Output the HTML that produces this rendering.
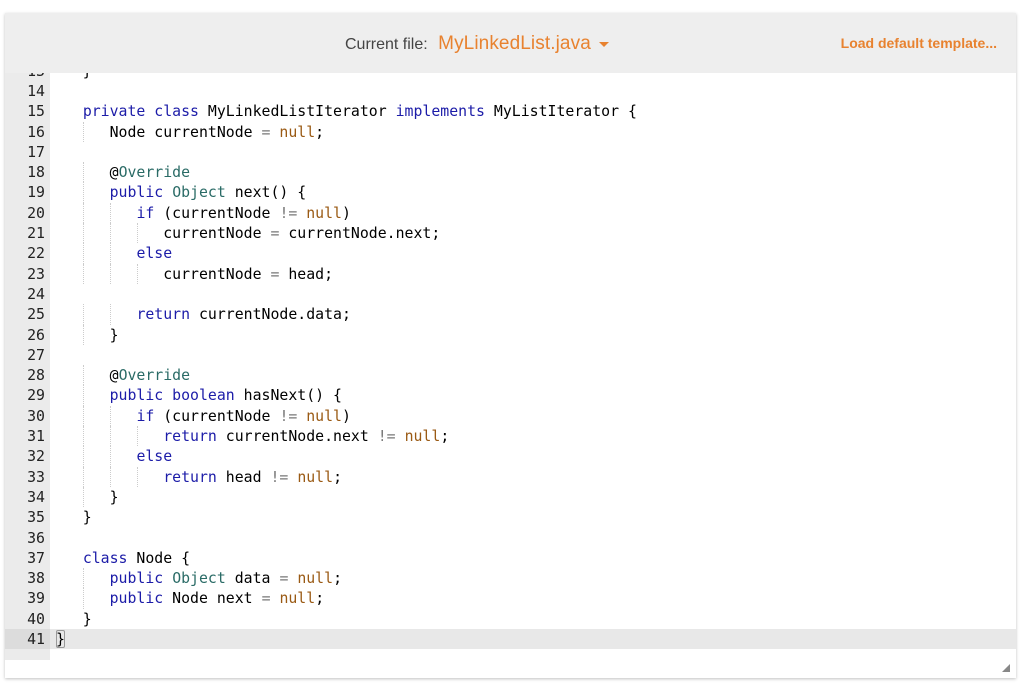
<!DOCTYPE html>
<html><head><meta charset="utf-8"><style>
html,body{margin:0;padding:0;background:#fff;width:1024px;height:686px;overflow:hidden}
.card{position:absolute;left:5px;top:13px;width:1011px;height:665px;background:#fff;box-shadow:0 1px 3px rgba(0,0,0,.25);overflow:hidden}
.hdr{position:absolute;left:0;top:0;width:100%;height:60px;background:#eeeeee;z-index:3;font-family:"Liberation Sans",sans-serif}
.cur{position:absolute;left:340px;top:20px;font-size:16px;color:#444}
.cur b{color:#e8822f;font-weight:normal;font-size:19px;margin-left:6px;letter-spacing:0.1px}
.tri{display:inline-block;width:0;height:0;border-left:5px solid transparent;border-right:5px solid transparent;border-top:5px solid #e8822f;vertical-align:middle;margin-left:8px}
.ld{position:absolute;right:19px;top:22px;font-size:14px;color:#e8822f;font-weight:bold}
.gut{position:absolute;left:0;top:0;width:45px;height:647px;background:#ebebeb;z-index:1}
.code{position:absolute;left:0;top:47.7px;width:100%;z-index:2;font-family:"DejaVu Sans Mono","Liberation Mono",monospace;font-size:14.85px}
.l{height:20.3px;line-height:20.3px;position:relative;white-space:pre;color:#000}
.n{position:absolute;left:0;width:40px;text-align:right;color:#222}
.t{position:absolute;left:51px}
.act{background:#e8e8e8}
.k{color:#1c1ca8}.nu{color:#9a5a14}.o{color:#777}.a{color:#2a6b66}
.g{position:absolute;top:0;height:20.3px;border-left:1px dotted #ccc}
.br{outline:1px solid #999;outline-offset:-1px;border-radius:2px}
.rs{position:absolute;right:6px;bottom:6px;width:0;height:0;border-left:8px solid transparent;border-bottom:8px solid #888;z-index:4}
</style></head><body>
<div class="card">
<div class="hdr"><div class="cur">Current file: <b>MyLinkedList.java</b><span class="tri"></span></div><div class="ld">Load default template...</div></div>
<div class="gut"></div>
<div class="code">
<div class="l"><span class="n">13</span><span class="t">   }</span></div>
<div class="l"><span class="n">14</span><span class="t"></span></div>
<div class="l"><span class="n">15</span><span class="t">   <span class="k">private class</span> MyLinkedListIterator <span class="k">implements</span> MyListIterator {</span></div>
<div class="l"><span class="n">16</span><i class="g" style="left:78px"></i><span class="t">      Node currentNode <span class="o">=</span> <span class="nu">null</span>;</span></div>
<div class="l"><span class="n">17</span><span class="t"></span></div>
<div class="l"><span class="n">18</span><i class="g" style="left:78px"></i><span class="t">      @<span class="a">Override</span></span></div>
<div class="l"><span class="n">19</span><i class="g" style="left:78px"></i><span class="t">      <span class="k">public</span> <span class="a">Object</span> next() {</span></div>
<div class="l"><span class="n">20</span><i class="g" style="left:78px"></i><i class="g" style="left:105px"></i><span class="t">         <span class="k">if</span> (currentNode <span class="o">!=</span> <span class="nu">null</span>)</span></div>
<div class="l"><span class="n">21</span><i class="g" style="left:78px"></i><i class="g" style="left:105px"></i><i class="g" style="left:132px"></i><span class="t">            currentNode <span class="o">=</span> currentNode.next;</span></div>
<div class="l"><span class="n">22</span><i class="g" style="left:78px"></i><i class="g" style="left:105px"></i><span class="t">         <span class="k">else</span></span></div>
<div class="l"><span class="n">23</span><i class="g" style="left:78px"></i><i class="g" style="left:105px"></i><i class="g" style="left:132px"></i><span class="t">            currentNode <span class="o">=</span> head;</span></div>
<div class="l"><span class="n">24</span><span class="t"></span></div>
<div class="l"><span class="n">25</span><i class="g" style="left:78px"></i><i class="g" style="left:105px"></i><span class="t">         <span class="k">return</span> currentNode.data;</span></div>
<div class="l"><span class="n">26</span><i class="g" style="left:78px"></i><span class="t">      }</span></div>
<div class="l"><span class="n">27</span><span class="t"></span></div>
<div class="l"><span class="n">28</span><i class="g" style="left:78px"></i><span class="t">      @<span class="a">Override</span></span></div>
<div class="l"><span class="n">29</span><i class="g" style="left:78px"></i><span class="t">      <span class="k">public boolean</span> hasNext() {</span></div>
<div class="l"><span class="n">30</span><i class="g" style="left:78px"></i><i class="g" style="left:105px"></i><span class="t">         <span class="k">if</span> (currentNode <span class="o">!=</span> <span class="nu">null</span>)</span></div>
<div class="l"><span class="n">31</span><i class="g" style="left:78px"></i><i class="g" style="left:105px"></i><i class="g" style="left:132px"></i><span class="t">            <span class="k">return</span> currentNode.next <span class="o">!=</span> <span class="nu">null</span>;</span></div>
<div class="l"><span class="n">32</span><i class="g" style="left:78px"></i><i class="g" style="left:105px"></i><span class="t">         <span class="k">else</span></span></div>
<div class="l"><span class="n">33</span><i class="g" style="left:78px"></i><i class="g" style="left:105px"></i><i class="g" style="left:132px"></i><span class="t">            <span class="k">return</span> head <span class="o">!=</span> <span class="nu">null</span>;</span></div>
<div class="l"><span class="n">34</span><i class="g" style="left:78px"></i><span class="t">      }</span></div>
<div class="l"><span class="n">35</span><span class="t">   }</span></div>
<div class="l"><span class="n">36</span><span class="t"></span></div>
<div class="l"><span class="n">37</span><span class="t">   <span class="k">class</span> Node {</span></div>
<div class="l"><span class="n">38</span><i class="g" style="left:78px"></i><span class="t">      <span class="k">public</span> <span class="a">Object</span> data <span class="o">=</span> <span class="nu">null</span>;</span></div>
<div class="l"><span class="n">39</span><i class="g" style="left:78px"></i><span class="t">      <span class="k">public</span> Node next <span class="o">=</span> <span class="nu">null</span>;</span></div>
<div class="l"><span class="n">40</span><span class="t">   }</span></div>
<div class="l act"><span class="n" style="background:#dcdcdc;width:45px"><span style="padding-right:5px">41</span></span><span class="t"><span class="br">}</span></span></div>
</div>
<div class="rs"></div>
</div>
</body></html>
